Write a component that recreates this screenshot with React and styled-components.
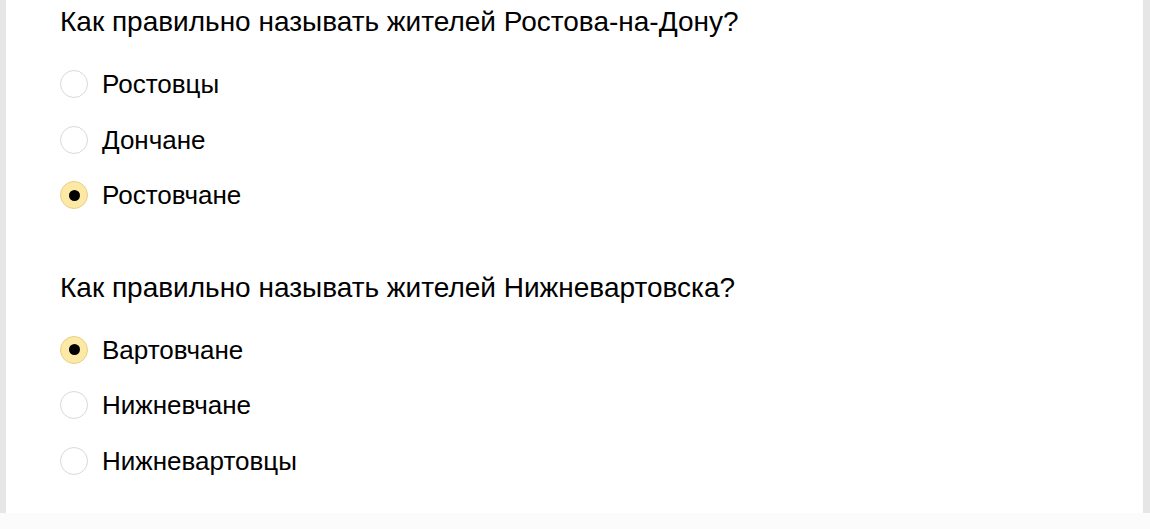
import React, { useState } from "react";
import styled, { createGlobalStyle } from "styled-components";

const GlobalStyle = createGlobalStyle`
  html, body {
    margin: 0;
    padding: 0;
    background: #fbfbfb;
  }
  body {
    font-family: "Liberation Sans", Arial, sans-serif;
    color: #000;
  }
`;

const quiz = [
  {
    id: "rostov",
    question: "Как правильно называть жителей Ростова-на-Дону?",
    options: ["Ростовцы", "Дончане", "Ростовчане"],
    selected: 2,
  },
  {
    id: "nizhnevartovsk",
    question: "Как правильно называть жителей Нижневартовска?",
    options: ["Вартовчане", "Нижневчане", "Нижневартовцы"],
    selected: 0,
  },
];

export default function App() {
  const [answers, setAnswers] = useState(quiz.map((q) => q.selected));

  const pick = (qi, oi) => {
    setAnswers((prev) => prev.map((a, i) => (i === qi ? oi : a)));
  };

  return (
    <>
      <GlobalStyle />
      <Frame>
        <Card>
          {quiz.map((q, qi) => (
            <Block key={q.id} $first={qi === 0}>
              <Question>{q.question}</Question>
              <Options>
                {q.options.map((opt, oi) => (
                  <Option key={opt} onClick={() => pick(qi, oi)}>
                    <Radio $checked={answers[qi] === oi} />
                    <Label>{opt}</Label>
                  </Option>
                ))}
              </Options>
            </Block>
          ))}
        </Card>
      </Frame>
    </>
  );
}

const Frame = styled.div`
  display: flex;
  width: 100%;
  box-sizing: border-box;
  border-left: 6px solid #e6e6e6;
  border-right: 7px solid #e6e6e6;
  background: #fff;
`;

const Card = styled.div`
  flex: 1;
  padding: 7px 0 24px 54px;
  display: flex;
  flex-direction: column;
`;

const Block = styled.div`
  display: flex;
  flex-direction: column;
  margin-top: ${(p) => (p.$first ? "0" : "49.5px")};
`;

const Question = styled.div`
  font-size: 28px;
  line-height: 30px;
  margin-bottom: 19px;
`;

const Options = styled.div`
  display: flex;
  flex-direction: column;
`;

const Option = styled.label`
  display: flex;
  align-items: center;
  height: 55.75px;
  cursor: pointer;
`;

const Radio = styled.span`
  position: relative;
  width: 28px;
  height: 28px;
  box-sizing: border-box;
  border-radius: 50%;
  border: 1px solid ${(p) => (p.$checked ? "#e8cf86" : "#d9d9d9")};
  background: ${(p) => (p.$checked ? "#fde9a6" : "#fff")};
  margin-right: 14px;
  flex-shrink: 0;

  &::after {
    content: "";
    display: ${(p) => (p.$checked ? "block" : "none")};
    position: absolute;
    left: 50%;
    top: 50%;
    width: 11px;
    height: 11px;
    margin: -5.5px 0 0 -5.5px;
    border-radius: 50%;
    background: #000;
  }
`;

const Label = styled.span`
  font-size: 26px;
  line-height: 28px;
`;
